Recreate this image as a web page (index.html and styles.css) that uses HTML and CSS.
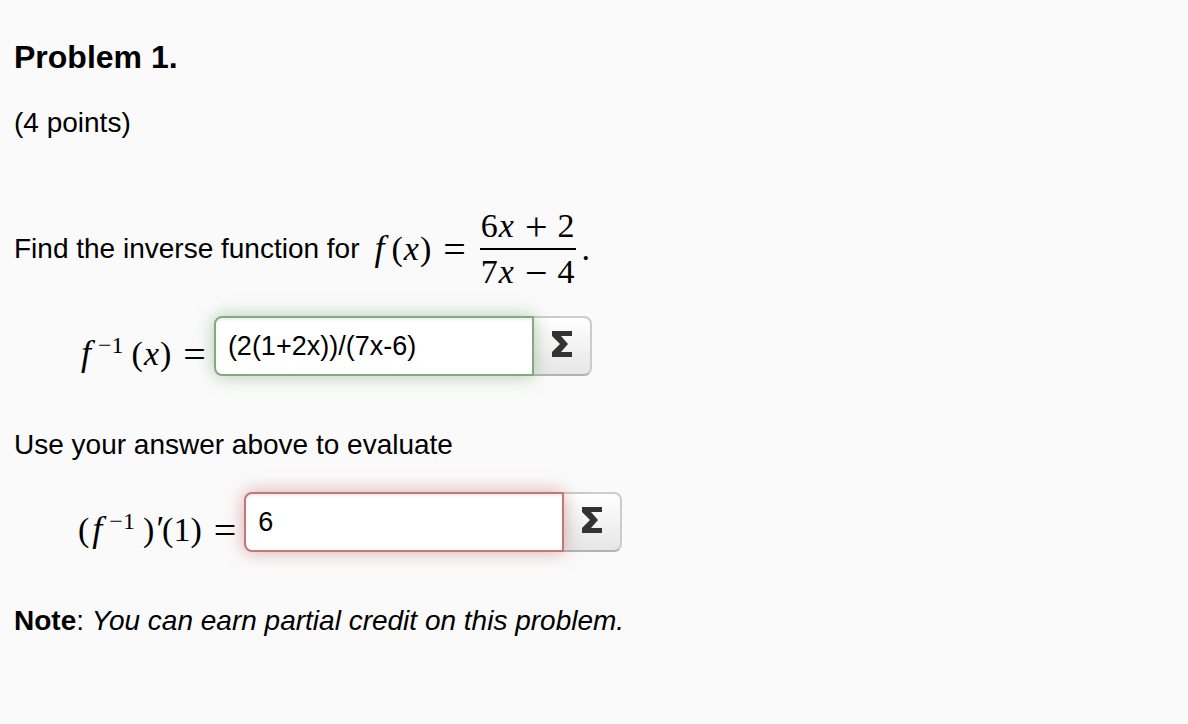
FILE: index.html
```html
<!DOCTYPE html>
<html lang="en">
<head>
<meta charset="utf-8">
<title>Problem 1</title>
<link rel="stylesheet" href="styles.css">
</head>
<body>
<main class="problem">
  <h1 class="title">Problem 1.</h1>
  <p class="points">(4 points)</p>
  <div class="question">
    <span class="lead">Find the inverse function for</span>
    <span class="math"><i class="fn">f</i>(<i class="var">x</i>)<span class="op equals">=</span></span>
    <span class="math fraction">
      <span class="numerator">6<i class="var">x</i><span class="op">+</span>2</span>
      <span class="denominator">7<i class="var">x</i><span class="op">−</span>4</span>
    </span>
    <span class="math stop">.</span>
  </div>
  <div class="answer">
    <label class="math" for="inverse"><i class="fn">f</i><sup>−1</sup>(<i class="var">x</i>)<span class="op equals">=</span></label>
    <div class="field">
      <input class="entry correct" id="inverse" type="text" value="(2(1+2x))/(7x-6)">
      <button class="sigma" type="button" aria-label="Equation editor"><svg viewBox="0 0 20 26"><path d="M0 0H20V5H9L16 13L9 21H20V26H0V21L8 13L0 5Z"/></svg></button>
    </div>
  </div>
  <p class="instruction">Use your answer above to evaluate</p>
  <div class="answer second">
    <label class="math" for="derivative">(<i class="fn">f</i><sup>−1</sup>)<i class="prime">′</i>(1)<span class="op equals">=</span></label>
    <div class="field">
      <input class="entry incorrect" id="derivative" type="text" value="6">
      <button class="sigma" type="button" aria-label="Equation editor"><svg viewBox="0 0 20 26"><path d="M0 0H20V5H9L16 13L9 21H20V26H0V21L8 13L0 5Z"/></svg></button>
    </div>
  </div>
  <p class="note"><b>Note</b>: <em>You can earn partial credit on this problem.</em></p>
</main>
</body>
</html>
```
FILE: styles.css
```css
* { box-sizing: border-box; }
body { margin: 0; background: #fafafa; color: #000; font: 28px/40px "Liberation Sans", Arial, sans-serif; }
.problem { padding: 36px 14px; }
.title { margin: 0; font-size: 32px; line-height: 42px; }
.points { margin: 25px 0 60px; }
.math { font-family: "Liberation Serif", "Times New Roman", serif; font-size: 34px; white-space: nowrap; }
.question { display: flex; align-items: center; min-height: 92px; }
.lead { margin-right: 12px; }
.fn { margin: 0 7px 0 3px; font-size: 36px; line-height: 0; }
.var { margin: 0 1px; }
.op { margin: 0 10px; font-size: 40px; line-height: 0; vertical-align: -3px; }
.equals { margin: 0 0 0 12px; }
.fraction { display: flex; flex-direction: column; margin-left: 14px; text-align: center; line-height: 44px; }
.numerator { padding: 0 1px; border-bottom: 2px solid #000; }
.stop { margin-left: 6px; }
.answer { display: flex; align-items: center; gap: 8px; margin: 21px 0 0 64px; }
.answer .math { padding-top: 15px; }
.second { margin-top: 27px; }
sup { margin-right: 8px; font-size: 24px; line-height: 0; vertical-align: 12px; }
.prime { font-size: 36px; line-height: 0; }
.field { display: flex; height: 60px; }
.entry { position: relative; width: 320px; padding: 0 12px; border: 2px solid; border-radius: 8px 0 0 8px; background: #fff; color: #000; font: inherit; font-size: 27px; }
.correct { border-color: #81ab7c; box-shadow: inset 0 2px 2px #0001, 0 0 18px #81ab7c99; }
.incorrect { border-color: #c47774; box-shadow: inset 0 2px 2px #0001, 0 0 18px #c4777499; }
.sigma { width: 58px; padding: 0 0 4px; border: 2px solid #ccc; border-bottom-color: #b3b3b3; border-left: 0; border-radius: 0 8px 8px 0; background: linear-gradient(#fff, #e6e6e6); }
.sigma svg { width: 20px; height: 26px; fill: #333; vertical-align: middle; }
.instruction { margin: 49px 0 0; }
.note { margin: 49px 0 0; }
```
